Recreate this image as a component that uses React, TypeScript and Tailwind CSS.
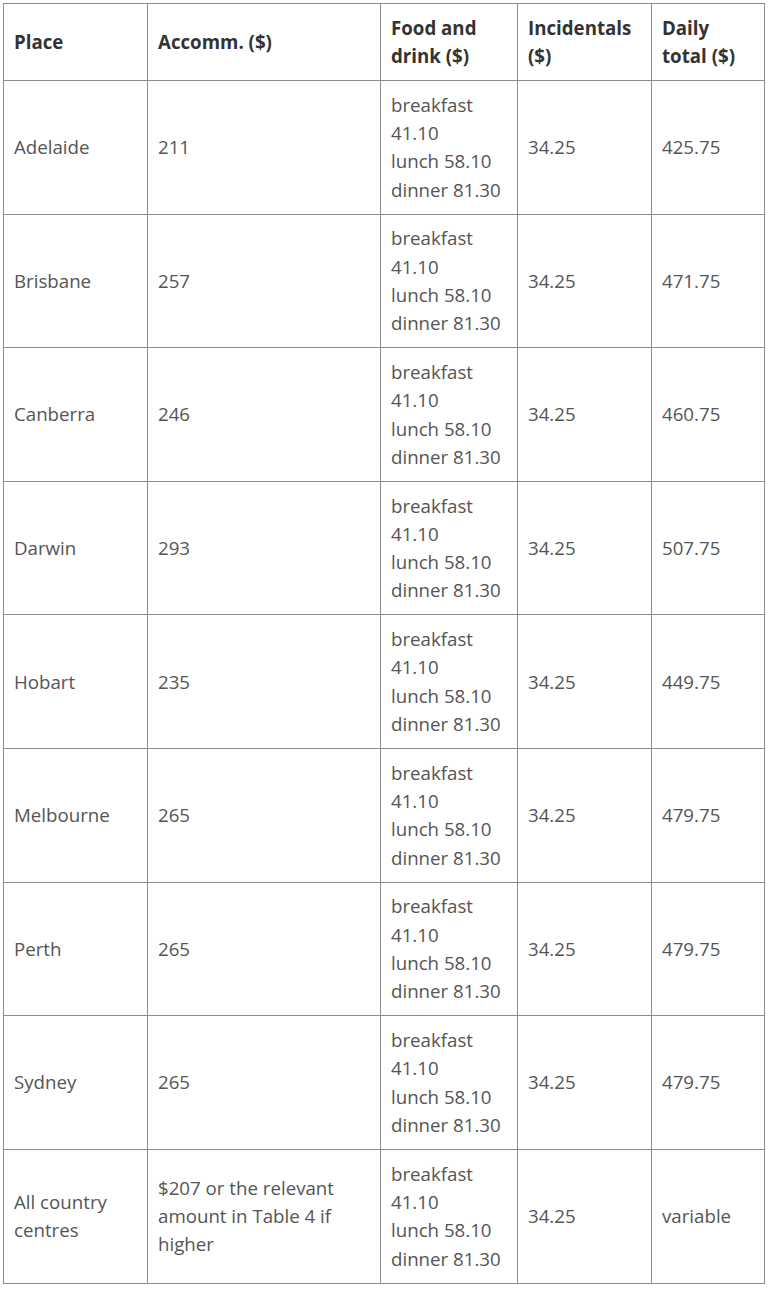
const rows: [string, string, string][] = [
  ["Adelaide", "211", "425.75"],
  ["Brisbane", "257", "471.75"],
  ["Canberra", "246", "460.75"],
  ["Darwin", "293", "507.75"],
  ["Hobart", "235", "449.75"],
  ["Melbourne", "265", "479.75"],
  ["Perth", "265", "479.75"],
  ["Sydney", "265", "479.75"],
];

const td = "border border-[#8c8c8c] px-[10px] py-[9.67px] align-middle";

function Food() {
  return (
    <>
      breakfast
      <br />
      41.10
      <br />
      lunch 58.10
      <br />
      dinner 81.30
    </>
  );
}

export default function App() {
  return (
    <div className="bg-white p-[3px] w-[768px] min-h-[1290px]" style={{ fontFamily: '"Open Sans", sans-serif' }}>
      <table className="border-collapse w-[761px] table-fixed text-[18.7px] leading-[28.33px] text-[#555]">
        <colgroup>
          <col className="w-[144px]" />
          <col className="w-[233px]" />
          <col className="w-[137px]" />
          <col className="w-[134px]" />
          <col className="w-[113px]" />
        </colgroup>
        <thead>
          <tr className="font-bold text-[#333] text-left">
            <th className={td}>Place</th>
            <th className={td}>Accomm. ($)</th>
            <th className={td}>
              Food and
              <br />
              drink ($)
            </th>
            <th className={td}>
              Incidentals
              <br />
              ($)
            </th>
            <th className={td}>
              Daily
              <br />
              total ($)
            </th>
          </tr>
        </thead>
        <tbody>
          {rows.map(([place, acc, total]) => (
            <tr key={place}>
              <td className={td}>{place}</td>
              <td className={td}>{acc}</td>
              <td className={td}>
                <Food />
              </td>
              <td className={td}>34.25</td>
              <td className={td}>{total}</td>
            </tr>
          ))}
          <tr>
            <td className={td}>
              All country
              <br />
              centres
            </td>
            <td className={td}>
              $207 or the relevant
              <br />
              amount in Table 4 if
              <br />
              higher
            </td>
            <td className={td}>
              <Food />
            </td>
            <td className={td}>34.25</td>
            <td className={td}>variable</td>
          </tr>
        </tbody>
      </table>
    </div>
  );
}
